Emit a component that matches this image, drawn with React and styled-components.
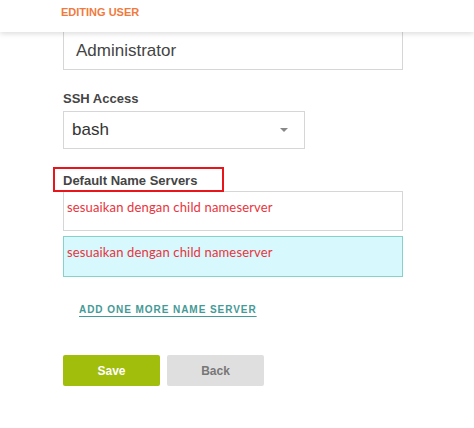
import React from 'react';
import styled, { createGlobalStyle } from 'styled-components';

// colours picked from the screenshot
const orange = '#f07a3e';
const labelGrey = '#454545';
const borderGrey = '#d6d6d6';
const red = '#e8343c';
const teal = '#449a96';

const GlobalStyle = createGlobalStyle`
  html, body {
    margin: 0;
    padding: 0;
    background: #fff;
    font-family: "Liberation Sans", Arial, sans-serif;
  }
`;

const Page = styled.div`
  width: 474px;
  height: 428px;
  overflow: hidden;
  background: #fff;
`;

const Header = styled.div`
  position: relative;
  z-index: 2;
  height: 32px;
  background: #fff;
  box-shadow: 0 2px 5px rgba(0, 0, 0, 0.13);
  display: flex;
  align-items: center;
  padding-left: 61px;
  padding-bottom: 8px;
  box-sizing: border-box;
`;

const HeaderTitle = styled.span`
  color: ${orange};
  font-size: 11px;
  font-weight: bold;
`;

const Form = styled.div`
  display: flex;
  flex-direction: column;
  padding-left: 63px;
`;

const TextBox = styled.div`
  box-sizing: border-box;
  width: ${p => p.width || 340}px;
  height: ${p => p.height || 40}px;
  border: 1px solid ${borderGrey};
  ${p => p.cut && 'border-top: none;'}
  background: #fff;
  display: flex;
  align-items: center;
  padding-left: 12px;
  font-size: 17px;
  color: #444;
`;

const Label = styled.div`
  font-size: 13px;
  font-weight: bold;
  color: ${labelGrey};
  margin: ${p => p.margin || '0'};
`;

const Select = styled.div`
  box-sizing: border-box;
  width: 242px;
  height: 38px;
  border: 1px solid ${borderGrey};
  display: flex;
  align-items: center;
  justify-content: space-between;
  padding: 0 16px 0 8px;
  font-size: 17px;
  color: #333;
`;

const Caret = styled.span`
  width: 0;
  height: 0;
  border-left: 4px solid transparent;
  border-right: 4px solid transparent;
  border-top: 4px solid #888;
`;

const Highlight = styled.div`
  position: relative;
  z-index: 1;
  box-sizing: border-box;
  align-self: flex-start;
  width: 171px;
  height: 25px;
  margin: 18px 0 -1px -10px;
  border: 2px solid #e8161b;
  display: flex;
  align-items: center;
  padding: 1px 0 0 8px;
`;

const NameServer = styled.div`
  box-sizing: border-box;
  width: 340px;
  height: ${p => (p.active ? 41 : 40)}px;
  margin-top: ${p => (p.active ? 5 : 0)}px;
  border: 1px solid ${p => (p.active ? '#86d2cb' : borderGrey)};
  background: ${p => (p.active ? '#d7f8fc' : '#fff')};
  padding: 7px 3px 0;
  font-family: Lato, "Open Sans", sans-serif;
  font-size: 13px;
  letter-spacing: 0.15px;
  color: ${red};
`;

const AddLink = styled.a`
  align-self: flex-start;
  margin: 27px 0 0 16px;
  color: ${teal};
  font-size: 10px;
  font-weight: bold;
  letter-spacing: 0.95px;
  text-decoration: underline;
  text-underline-offset: 3px;
  cursor: pointer;
`;

const Actions = styled.div`
  display: flex;
  gap: 7px;
  margin-top: 40px;
`;

const Button = styled.button`
  width: 97px;
  height: 31px;
  border: none;
  border-radius: 2px;
  font-family: "Liberation Sans", Arial, sans-serif;
  font-size: 12px;
  font-weight: bold;
  background: ${p => (p.primary ? '#a2be0c' : '#e0dfdf')};
  color: ${p => (p.primary ? '#fff' : '#777')};
  cursor: pointer;
`;

export default function App() {
  return (
    <Page>
      <GlobalStyle />
      <Header>
        <HeaderTitle>EDITING USER</HeaderTitle>
      </Header>
      <Form>
        <TextBox cut height={38}>Administrator</TextBox>
        <Label margin="21px 0 5px">SSH Access</Label>
        <Select>
          <span>bash</span>
          <Caret />
        </Select>
        <Highlight>
          <Label>Default Name Servers</Label>
        </Highlight>
        <NameServer>sesuaikan dengan child nameserver</NameServer>
        <NameServer active>sesuaikan dengan child nameserver</NameServer>
        <AddLink>ADD ONE MORE NAME SERVER</AddLink>
        <Actions>
          <Button primary>Save</Button>
          <Button>Back</Button>
        </Actions>
      </Form>
    </Page>
  );
}
